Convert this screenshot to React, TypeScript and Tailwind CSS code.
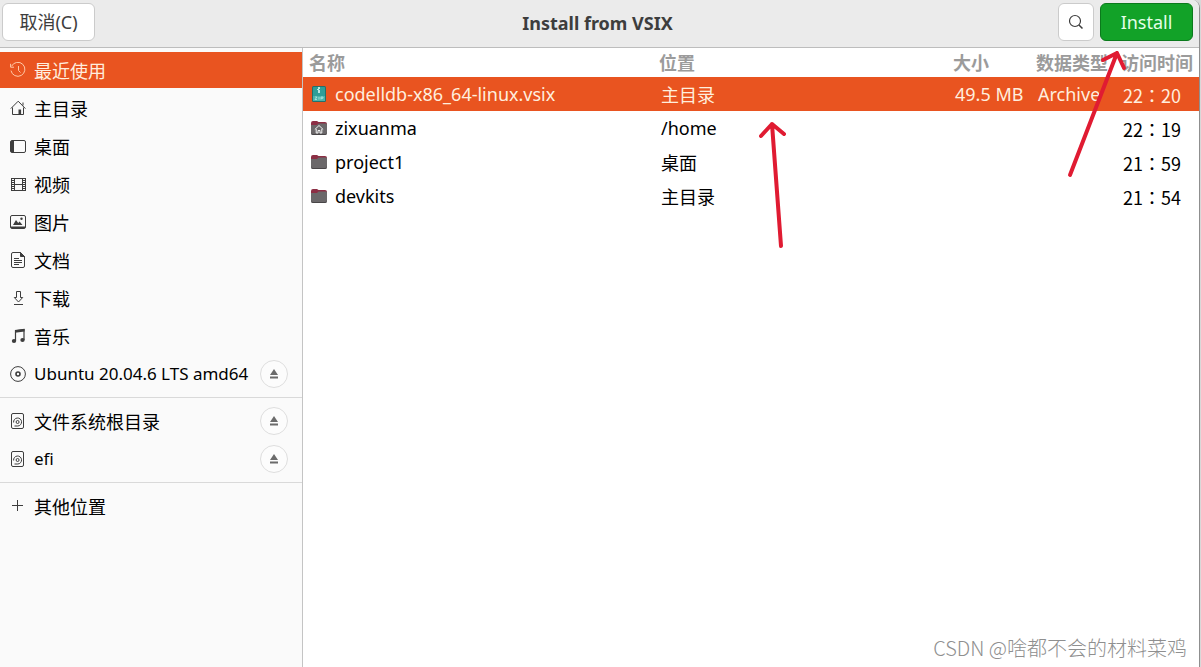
import type { ReactNode } from "react";
import clsx from "clsx";

type Place = {
  label: string;
  icon: ReactNode;
  latin?: boolean;
  ejectable?: boolean;
};

type FileRow = {
  name: string;
  location: string;
  size?: string;
  type?: string;
  time: string;
  icon: ReactNode;
};

function Icon({ children }: { children: ReactNode }) {
  return (
    <svg
      viewBox="0 0 16 16"
      className="size-4 shrink-0"
      fill="none"
      stroke="currentColor"
      strokeWidth="1"
      aria-hidden="true"
    >
      {children}
    </svg>
  );
}

const RecentIcon = () => (
  <Icon>
    <path d="M1.6 4.2A7 7 0 1 1 1 8.6" />
    <path d="M.6 1.8v3.4H4" />
    <path d="M8.5 4v4.5l2 2" />
  </Icon>
);

const HomeIcon = () => (
  <Icon>
    <path d="M.8 8.6 8.2 1.2l7.2 7.4" />
    <path d="M2.5 7.5v7h11v-7M13 2.5v3" />
    <path d="M8.5 9.5h2.6v5H8.5z" fill="currentColor" stroke="none" />
  </Icon>
);

const DesktopIcon = () => (
  <Icon>
    <rect x=".5" y="2.5" width="15" height="12" rx="1.5" />
    <path d="M1 3h3v11H1z" fill="currentColor" stroke="none" />
  </Icon>
);

const VideoIcon = () => (
  <Icon>
    <path d="M4.5 2v13M12.5 2v13M4.5 2.5h8M4.5 8.5h8M4.5 14.5h8" />
    <path d="M3 2v13M14 2v13" strokeWidth="2" strokeDasharray="1 1" />
    <path d="M1.5 2v13M15.5 2v13" />
  </Icon>
);

const PictureIcon = () => (
  <Icon>
    <rect x=".5" y="1.5" width="15" height="13" rx="1.5" />
    <path d="M1 12.4h14V14H1zM3 11l3-5 2.200 3 1.400-1.400L12.500 11z" fill="currentColor" stroke="none" />
    <circle cx="11.5" cy="4.8" r="1.2" fill="currentColor" stroke="none" />
  </Icon>
);

const DocumentIcon = () => (
  <Icon>
    <path d="M3 .5h7.500l4 4V14a1.500 1.500 0 0 1-1.500 1.500H3A1.500 1.500 0 0 1 1.500 14V2A1.500 1.500 0 0 1 3 .5z" />
    <path d="M10.5 .5v4h4z" fill="currentColor" />
    <path d="M4 6.5h5M4 8.5h8M4 10.5h8M4 12.5h5" />
  </Icon>
);

const DownloadIcon = () => (
  <Icon>
    <path d="M6.500 1.500h4v6h2.200L8.500 12 4.300 7.500h2.200z" />
    <path d="M4 14.5h9" />
  </Icon>
);

const MusicIcon = () => (
  <Icon>
    <path d="M5.500 13V2.500l8.500-1V12" strokeWidth="1.2" />
    <path d="M5 2.200 14.600 1v2.600L5 4.800z" fill="currentColor" stroke="none" />
    <ellipse cx="4" cy="13" rx="2.2" ry="1.9" fill="currentColor" stroke="none" />
    <ellipse cx="12.5" cy="12" rx="2.2" ry="1.9" fill="currentColor" stroke="none" />
  </Icon>
);

const DiscIcon = () => (
  <Icon>
    <circle cx="8" cy="8" r="7.4" />
    <circle cx="8" cy="8" r="2" strokeWidth="1.6" />
  </Icon>
);

const DriveIcon = () => (
  <Icon>
    <rect x="1.5" y=".5" width="12" height="15" rx="1.5" />
    <path d="M3.600 9.500a4 4 0 1 1 4.200 3.500H4.500" />
    <circle cx="7.6" cy="9" r="1.5" />
  </Icon>
);

const PlusIcon = () => (
  <Icon>
    <path d="M7.500 2v11M2 7.500h11" />
  </Icon>
);

const EjectIcon = () => (
  <svg viewBox="0 0 10 10" className="size-[10px]" fill="#6b6b6b" aria-hidden="true">
    <path d="M5 0l4 6H1zM1 7.500h8v2H1z" />
  </svg>
);

const ZipIcon = () => (
  <svg viewBox="0 0 16 16" className="size-4 shrink-0" aria-hidden="true">
    <rect x="1" y="0" width="14" height="16" rx="1.5" fill="#22706c" />
    <rect x="2" y="1" width="12" height="14" rx=".5" fill="#2f9e98" />
    <path d="M2 10h12v5H2z" fill="#4bb3ab" />
    <path d="M8 1v2M7 3v1M8 4v3" stroke="#e9fffc" strokeWidth="1.5" />
    <path d="M4 11h2l-2 2.500h2M8 11v2.500M10 13.500V11h2v1.300h-2" stroke="#bdf0ea" strokeWidth=".7" fill="none" />
  </svg>
);

function FolderIcon({ home }: { home?: boolean }) {
  return (
    <svg viewBox="0 0 16 16" className="size-4 shrink-0" aria-hidden="true">
      <path d="M0 3a2 2 0 0 1 2-2h4l1.500 1H14a2 2 0 0 1 2 2v3H0z" fill="#8c2f45" />
      <path d="M0 5h6l1.500-1.500H15a1 1 0 0 1 1 1V13a2 2 0 0 1-2 2H2a2 2 0 0 1-2-2z" fill="#6b686a" />
      <path d="M0 12v1a2 2 0 0 0 2 2h12a2 2 0 0 0 2-2v-1a2 2 0 0 1-2 2H2a2 2 0 0 1-2-2z" fill="#484547" />
      {home && (
        <path d="M3.800 9.500 8 5.500l4.200 4M5.200 9v4H7v-2.500h2V13h1.800V9" fill="none" stroke="#f3f3f3" />
      )}
    </svg>
  );
}

const places: Place[][] = [
  [
    { label: "最近使用", icon: <RecentIcon /> },
    { label: "主目录", icon: <HomeIcon /> },
    { label: "桌面", icon: <DesktopIcon /> },
    { label: "视频", icon: <VideoIcon /> },
    { label: "图片", icon: <PictureIcon /> },
    { label: "文档", icon: <DocumentIcon /> },
    { label: "下载", icon: <DownloadIcon /> },
    { label: "音乐", icon: <MusicIcon /> },
    { label: "Ubuntu 20.04.6 LTS amd64", icon: <DiscIcon />, latin: true, ejectable: true },
  ],
  [
    { label: "文件系统根目录", icon: <DriveIcon />, ejectable: true },
    { label: "efi", icon: <DriveIcon />, latin: true, ejectable: true },
  ],
  [{ label: "其他位置", icon: <PlusIcon /> }],
];

const files: FileRow[] = [
  {
    name: "codelldb-x86_64-linux.vsix",
    location: "主目录",
    size: "49.5 MB",
    type: "Archive",
    time: "22：20",
    icon: <ZipIcon />,
  },
  { name: "zixuanma", location: "/home", time: "22：19", icon: <FolderIcon home /> },
  { name: "project1", location: "桌面", time: "21：59", icon: <FolderIcon /> },
  { name: "devkits", location: "主目录", time: "21：54", icon: <FolderIcon /> },
];

const columns = ["名称", "位置", "大小", "数据类型", "访问时间"];

function PlaceItem({ place, selected }: { place: Place; selected: boolean }) {
  return (
    <li
      className={clsx(
        "flex h-9 items-center pr-3.5 pl-2.5",
        selected ? "bg-[#e95420] text-[#ffeede]" : "text-black",
      )}
    >
      <a
        href="#"
        aria-current={selected ? "page" : undefined}
        className="flex min-w-0 flex-1 items-center gap-2 whitespace-nowrap"
      >
        <span className={selected ? "text-[#ffc9a8]" : "text-[#3d3d3d]"}>{place.icon}</span>
        <span className={place.latin ? "text-[17px]" : "pt-0.5 text-lg"}>{place.label}</span>
      </a>
      {place.ejectable && (
        <button
          type="button"
          aria-label={`Eject ${place.label}`}
          className="flex size-7 shrink-0 items-center justify-center rounded-full border border-[#dedede] bg-[#fcfcfc]"
        >
          <EjectIcon />
        </button>
      )}
    </li>
  );
}

function TitleBar() {
  return (
    <header className="grid h-12 grid-cols-[1fr_auto_1fr] items-start border-b border-[#bdbdbd] bg-[#ebebeb] pt-[3px] pr-1.5 pl-0.5">
      <button
        type="button"
        className="h-[38px] w-[93px] rounded-md border border-[#cbcbcb] bg-white text-lg text-[#3d3d3d]"
      >
        取消(C)
      </button>
      <h1 className="text-lg leading-10 font-bold text-[#3d3d3d]">Install from VSIX</h1>
      <div className="flex gap-1.5 justify-self-end">
        <button
          type="button"
          aria-label="Search"
          className="flex h-[38px] w-9 items-center justify-center rounded-md border border-[#cbcbcb] bg-white text-[#3d3d3d]"
        >
          <Icon>
            <circle cx="7" cy="7" r="5.500" strokeWidth="1.2" />
            <path d="M11 11l3.500 3.500" strokeWidth="1.5" />
          </Icon>
        </button>
        <button
          type="button"
          className="h-[38px] w-[93px] rounded-md border border-[#0b7a1c] bg-[#12a228] text-lg text-[#e4ffe8]"
        >
          Install
        </button>
      </div>
    </header>
  );
}

function FileTable() {
  return (
    <table className="w-full table-fixed text-left text-lg leading-7 whitespace-nowrap">
      <colgroup>
        <col className="w-[350px]" />
        <col />
        <col className="w-[83px]" />
        <col className="w-[85px]" />
        <col className="w-[84px]" />
      </colgroup>
      <thead>
        <tr className="h-[29px]">
          {columns.map((column) => (
            <th key={column} scope="col" className="p-0 pl-1.5 font-bold text-[#9b9b9b]">
              {column}
            </th>
          ))}
        </tr>
      </thead>
      <tbody>
        {files.map((file, i) => (
          <tr
            key={file.name}
            aria-selected={i === 0}
            className={clsx("h-[34px]", i === 0 ? "bg-[#e95420] text-[#ffeede]" : "text-black")}
          >
            <td className="p-0 pl-2">
              <span className="flex items-center gap-2">
                {file.icon}
                {file.name}
              </span>
            </td>
            <td className={clsx("p-0 pl-2", !file.location.startsWith("/") && "pt-0.5")}>{file.location}</td>
            <td className="p-0 pl-2">{file.size}</td>
            <td className="p-0 pl-2">{file.type}</td>
            {/* The TC face centres the full-width colon */}
            <td className="p-0 pt-0.5 pl-2 font-['Noto_Sans_CJK_TC',sans-serif]" lang="zh-TW">
              {file.time}
            </td>
          </tr>
        ))}
      </tbody>
    </table>
  );
}

export default function App() {
  return (
    <div className="relative min-h-screen bg-[#d8d8d8] pr-px font-['Noto_Sans','Noto_Sans_CJK_SC',sans-serif]">
      <div className="flex min-h-screen flex-col overflow-hidden rounded-tr-lg border-r border-[#8f8f8f] bg-white">
        <TitleBar />
        <div className="flex flex-1">
          <nav aria-label="Places" className="w-[303px] shrink-0 border-r border-[#c4c4c4] bg-[#fafafa] pt-1">
            {places.map((group, g) => (
              <ul
                key={g}
                className={clsx("flex flex-col gap-0.5", g > 0 && "mt-[5px] border-t border-[#d9d9d9] pt-[5px]")}
              >
                {group.map((place, i) => (
                  <PlaceItem key={place.label} place={place} selected={g === 0 && i === 0} />
                ))}
              </ul>
            ))}
          </nav>
          <main className="min-w-0 flex-1">
            <FileTable />
          </main>
        </div>
      </div>

      {/* Hand-drawn arrows pointing at the Install button and the selected file */}
      <svg
        viewBox="0 0 80 140"
        className="pointer-events-none absolute top-[45px] right-[61px] h-[140px] w-20"
        fill="none"
        stroke="#e01b32"
        strokeWidth="4"
        strokeLinecap="round"
        strokeLinejoin="round"
        aria-hidden="true"
      >
        <path d="M10 130 57 8M43 15l14-7 7 15" />
      </svg>
      <svg
        viewBox="0 0 40 140"
        className="pointer-events-none absolute top-[115px] right-[411px] h-[140px] w-10"
        fill="none"
        stroke="#e01b32"
        strokeWidth="4"
        strokeLinecap="round"
        strokeLinejoin="round"
        aria-hidden="true"
      >
        <path d="M31 131 22 9M11 21 22 9l12 10" />
      </svg>

      <p className="absolute right-3.5 bottom-1 font-['Noto_Sans_CJK_SC',sans-serif] text-xl leading-[30px] font-light text-[#8f8f8f]">
        CSDN @啥都不会的材料菜鸡
      </p>
    </div>
  );
}
